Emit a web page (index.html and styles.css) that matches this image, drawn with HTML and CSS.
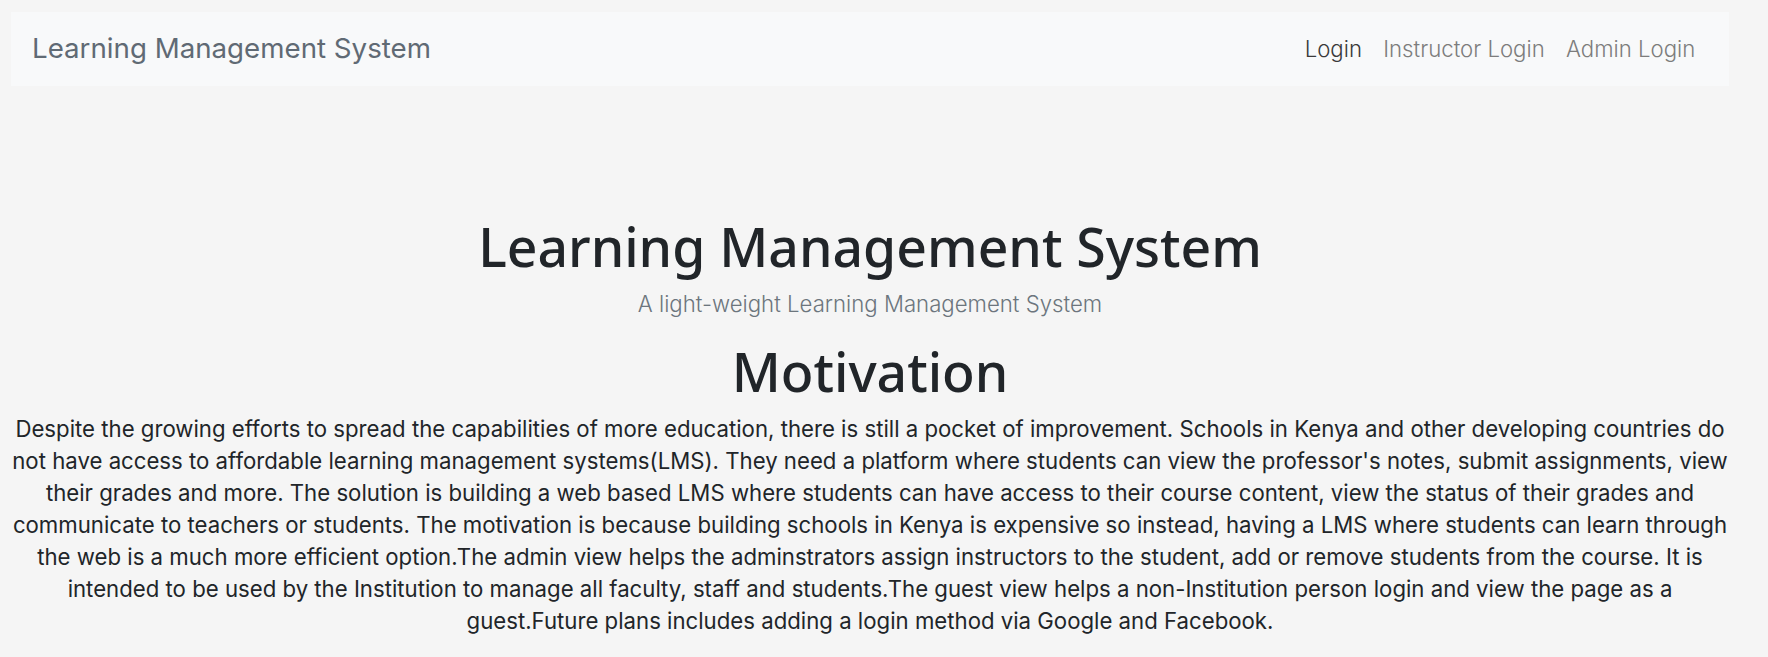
FILE: index.html
```html
<!DOCTYPE html>
<html lang="en">
<head>
<meta charset="utf-8">
<title>Learning Management System</title>
<link rel="stylesheet" href="styles.css">
</head>
<body>
<nav class="navbar">
  <a class="brand" href="#">Learning Management System</a>
  <ul class="nav-links">
    <li><a class="nav-link active" href="#">Login</a></li>
    <li><a class="nav-link" href="#">Instructor Login</a></li>
    <li><a class="nav-link" href="#">Admin Login</a></li>
  </ul>
</nav>
<main class="content">
  <h1 class="title">Learning Management System</h1>
  <p class="subtitle">A light-weight Learning Management System</p>
  <h1 class="title section-title">Motivation</h1>
  <p class="motivation">Despite the growing efforts to spread the capabilities of more education, there is still a pocket of improvement. Schools in Kenya and other developing countries do not have access to affordable learning management systems(LMS). They need a platform where students can view the professor's notes, submit assignments, view their grades and more. The solution is building a web based LMS where students can have access to their course content, view the status of their grades and communicate to teachers or students. The motivation is because building schools in Kenya is expensive so instead, having a LMS where students can learn through the web is a much more efficient option.The admin view helps the adminstrators assign instructors to the student, add or remove students from the course. It is intended to be used by the Institution to manage all faculty, staff and students.The guest view helps a non-Institution person login and view the page as a guest.Future plans includes adding a login method via Google and Facebook.</p>
</main>
</body>
</html>
```
FILE: styles.css
```css
html, body {
  margin: 0;
  padding: 0;
}
body {
  background: #f5f5f5;
  color: #212529;
  font-family: Inter, "Noto Sans", sans-serif;
  font-size: 22.2px;
  line-height: 1.5;
  overflow: hidden;
}
a {
  text-decoration: none;
}
.navbar {
  display: flex;
  align-items: center;
  justify-content: space-between;
  height: 74px;
  margin: 12px 39px 0 11px;
  padding: 0 23px 0 21px;
  background: #f8f9fa;
}
.brand {
  font-size: 27.7px;
  line-height: 1.5;
  color: #606a74;
  white-space: nowrap;
}
.nav-links {
  display: flex;
  list-style: none;
  margin: 0;
  padding: 0;
}
.nav-link {
  display: block;
  padding: 0 10.67px;
  font-size: 22.2px;
  line-height: 1.5;
  color: #7d7d7d;
  font-weight: 300;
}
.nav-link.active {
  color: #3a3a3a;
}
.content {
  margin: 0 39px 0 11px;
  text-align: center;
}
.title {
  margin: 129px 0 0;
  font-family: "Noto Sans", "Open Sans", sans-serif;
  font-size: 53.5px;
  font-weight: 500;
  line-height: 1.2;
  color: #212529;
}
.subtitle {
  margin: 7.6px 0 0;
  font-size: 22.2px;
  font-weight: 300;
  color: #6c757d;
}
.section-title {
  margin-top: 20px;
}
.motivation {
  margin: 9px -12px 0;
  font-size: 22.2px;
  line-height: 32px;
  font-weight: 400;
}
```
